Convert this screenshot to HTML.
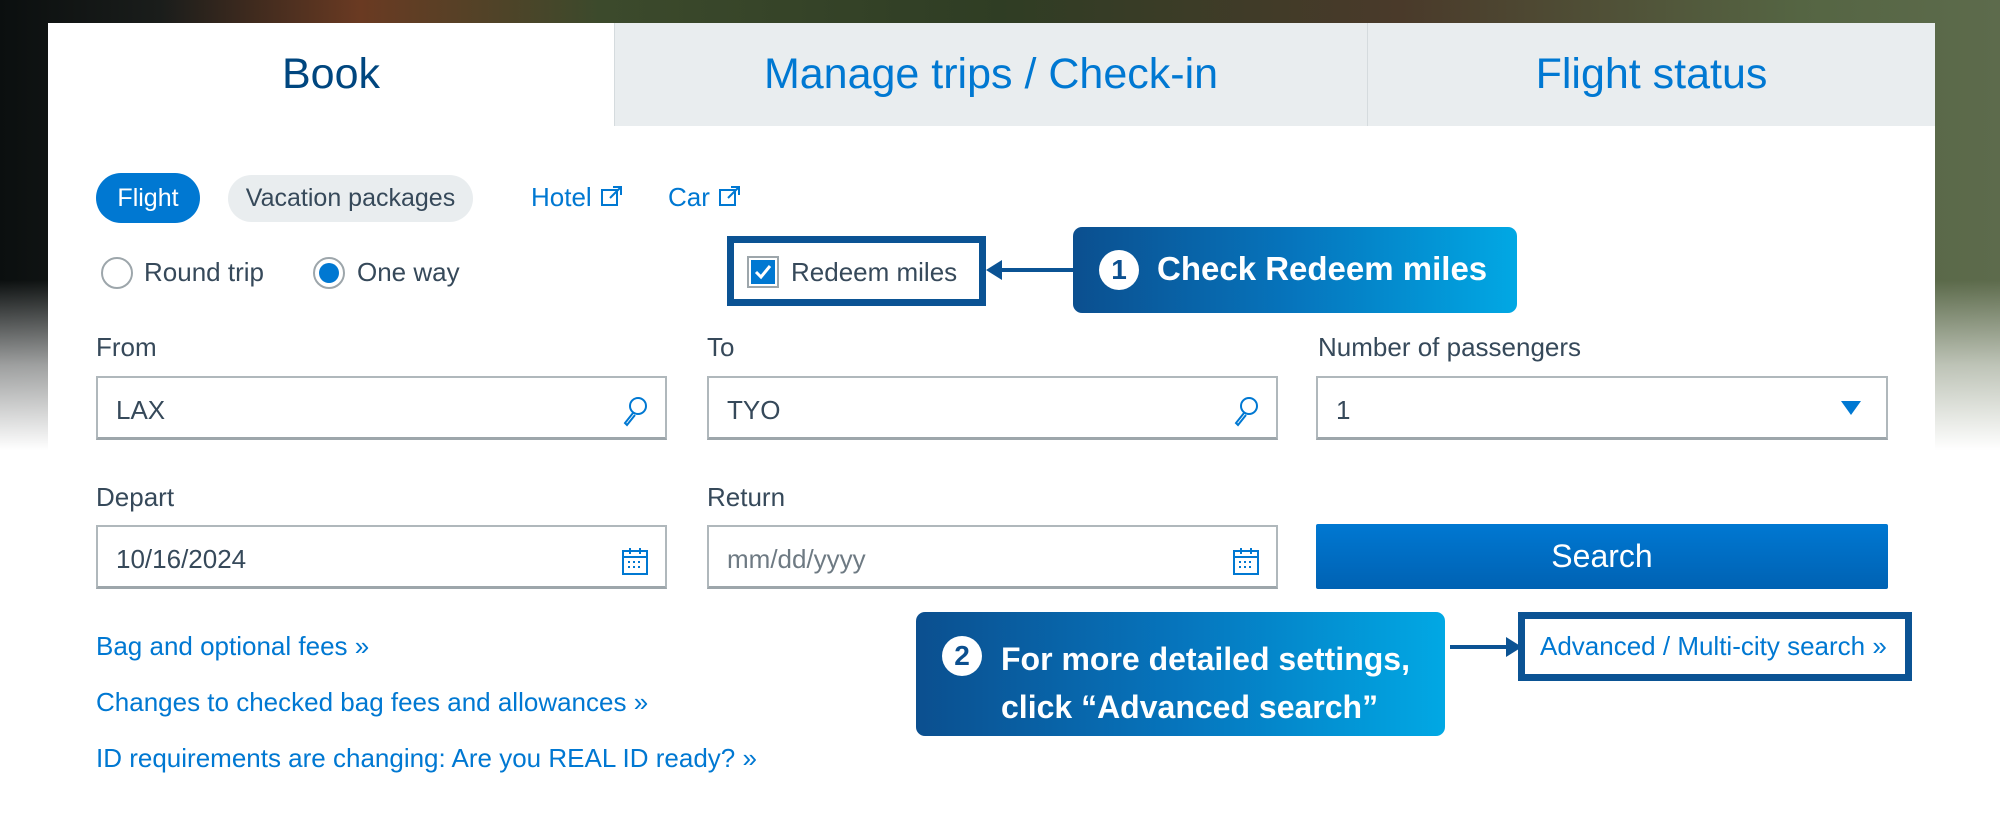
<!DOCTYPE html>
<html><head><meta charset="utf-8"><style>
*{margin:0;padding:0;box-sizing:border-box}
body{width:2000px;height:824px;position:relative;overflow:hidden;font-family:"Liberation Sans",Arial,sans-serif;background:#fff}
.bg{position:absolute;left:0;top:0;width:2000px;height:450px;background:linear-gradient(90deg,#0b0f0f 0%,#1a1d1b 8%,#6a3a22 18%,#3c4a2c 30%,#2f3d24 50%,#4a3a2a 70%,#556543 90%,#5d6b4c 100%)}
.fade{position:absolute;left:0;top:280px;width:2000px;height:170px;background:linear-gradient(180deg,rgba(255,255,255,0) 0%,rgba(255,255,255,.6) 50%,#fff 100%)}
.a{position:absolute}
.panel{left:48px;top:23px;width:1887px;height:801px;background:#fff}
.tab{top:23px;height:103px;display:flex;align-items:center;justify-content:center;font-size:43px;color:#0078d2}
.t{font-size:26px;color:#36495a;white-space:nowrap}
.inp{background:#fff;border:2px solid #b0b8bc;border-bottom:3px solid #9da6ab;height:64px}
.val{font-size:26px;color:#36495a;position:absolute;left:18px;top:17px}
.lnk{font-size:26px;color:#0078d2;white-space:nowrap}
.grad{background:linear-gradient(90deg,#0b4f8f 0%,#0675bd 50%,#01a8e4 100%);border-radius:9px}
.num{width:40px;height:40px;border-radius:50%;background:#fff;color:#0b4f8f;font-weight:bold;font-size:28px;display:flex;align-items:center;justify-content:center}
</style></head><body>
<div class="bg"></div><div class="fade"></div>
<div class="a panel"></div>
<div class="a tab" style="left:48px;width:566px;background:#fff;color:#00467f">Book</div>
<div class="a tab" style="left:614px;width:753px;background:#e9edef;border-left:1px solid #d5dbde">Manage trips / Check-in</div>
<div class="a tab" style="left:1367px;width:568px;background:#e9edef;border-left:1px solid #d5dbde">Flight status</div>

<div class="a" style="left:96px;top:173px;width:104px;height:50px;border-radius:25px;background:#0078d2;color:#fff;font-size:25px;display:flex;align-items:center;justify-content:center">Flight</div>
<div class="a" style="left:228px;top:175px;width:245px;height:47px;border-radius:24px;background:#e9edef;color:#36495a;font-size:25px;display:flex;align-items:center;justify-content:center">Vacation packages</div>
<div class="a lnk" style="left:531px;top:182px">Hotel</div>
<svg class="a" style="left:600px;top:184px" width="24" height="24" viewBox="0 0 24 24" fill="none" stroke="#0078d2" stroke-width="2"><rect x="2" y="6" width="15" height="15"/><path d="M10 14L21 3M13 3h8v8"/></svg>
<div class="a lnk" style="left:668px;top:182px">Car</div>
<svg class="a" style="left:718px;top:184px" width="24" height="24" viewBox="0 0 24 24" fill="none" stroke="#0078d2" stroke-width="2"><rect x="2" y="6" width="15" height="15"/><path d="M10 14L21 3M13 3h8v8"/></svg>

<div class="a" style="left:101px;top:257px;width:32px;height:32px;border-radius:50%;border:2px solid #9da6ab;background:#fff"></div>
<div class="a t" style="left:144px;top:257px">Round trip</div>
<div class="a" style="left:313px;top:257px;width:32px;height:32px;border-radius:50%;border:2px solid #9da6ab;background:#fff"><div style="position:absolute;left:4px;top:4px;width:20px;height:20px;border-radius:50%;background:#0078d2"></div></div>
<div class="a t" style="left:357px;top:257px">One way</div>

<div class="a" style="left:727px;top:236px;width:259px;height:70px;border:7px solid #0b5394;background:#fff"></div>
<div class="a" style="left:747px;top:256px;width:32px;height:32px;border:2px solid #9da6ab;background:#fff;padding:2px"><svg width="24" height="24" viewBox="0 0 24 24"><rect width="24" height="24" fill="#0078d2"/><path d="M5 12l5 5 9-11" stroke="#fff" stroke-width="3" fill="none"/></svg></div>
<div class="a t" style="left:791px;top:257px">Redeem miles</div>
<svg class="a" style="left:986px;top:258px" width="90" height="24"><path d="M0 12L16 2V22Z" fill="#0b5394"/><rect x="14" y="10" width="76" height="4" fill="#0b5394"/></svg>
<div class="a grad" style="left:1073px;top:227px;width:444px;height:86px"></div>
<div class="a num" style="left:1099px;top:250px">1</div>
<div class="a" style="left:1157px;top:250px;color:#fff;font-weight:bold;font-size:33px;white-space:nowrap">Check Redeem miles</div>

<div class="a t" style="left:96px;top:332px">From</div>
<div class="a t" style="left:707px;top:332px">To</div>
<div class="a t" style="left:1318px;top:332px">Number of passengers</div>
<div class="a inp" style="left:96px;top:376px;width:571px"><div class="val">LAX</div></div>
<div class="a inp" style="left:707px;top:376px;width:571px"><div class="val">TYO</div></div>
<div class="a inp" style="left:1316px;top:376px;width:572px"><div class="val">1</div></div>
<svg class="a" style="left:620px;top:395px" width="30" height="32" viewBox="0 0 30 32" fill="none" stroke="#0078d2" stroke-width="2"><circle cx="18" cy="11" r="8"/><path d="M13 18L5 28l2 2 8-10"/></svg>
<svg class="a" style="left:1231px;top:395px" width="30" height="32" viewBox="0 0 30 32" fill="none" stroke="#0078d2" stroke-width="2"><circle cx="18" cy="11" r="8"/><path d="M13 18L5 28l2 2 8-10"/></svg>
<svg class="a" style="left:1841px;top:400px" width="20" height="16"><path d="M0 1H20L10 15Z" fill="#0078d2"/></svg>

<div class="a t" style="left:96px;top:482px">Depart</div>
<div class="a t" style="left:707px;top:482px">Return</div>
<div class="a inp" style="left:96px;top:525px;width:571px"><div class="val">10/16/2024</div></div>
<div class="a inp" style="left:707px;top:525px;width:571px"><div class="val" style="color:#6e7a83">mm/dd/yyyy</div></div>
<svg class="a" style="left:621px;top:546px" width="28" height="30" viewBox="0 0 28 30" fill="none" stroke="#0078d2" stroke-width="2"><rect x="2" y="5" width="24" height="23"/><path d="M2 11h24M9 2v6M19 2v6"/><path d="M7 16h2M12 16h2M17 16h2M7 21h2M12 21h2M17 21h2" stroke-width="2"/></svg>
<svg class="a" style="left:1232px;top:546px" width="28" height="30" viewBox="0 0 28 30" fill="none" stroke="#0078d2" stroke-width="2"><rect x="2" y="5" width="24" height="23"/><path d="M2 11h24M9 2v6M19 2v6"/><path d="M7 16h2M12 16h2M17 16h2M7 21h2M12 21h2M17 21h2" stroke-width="2"/></svg>
<div class="a" style="left:1316px;top:524px;width:572px;height:65px;background:linear-gradient(180deg,#0078d2,#0062b3);border-radius:2px;color:#fff;font-size:32px;display:flex;align-items:center;justify-content:center">Search</div>

<div class="a lnk" style="left:96px;top:631px">Bag and optional fees »</div>
<div class="a lnk" style="left:96px;top:687px">Changes to checked bag fees and allowances »</div>
<div class="a lnk" style="left:96px;top:743px">ID requirements are changing: Are you REAL ID ready? »</div>

<div class="a grad" style="left:916px;top:612px;width:529px;height:124px"></div>
<div class="a num" style="left:942px;top:636px">2</div>
<div class="a" style="left:1001px;top:635px;color:#fff;font-weight:bold;font-size:32px;line-height:48px;white-space:nowrap">For more detailed settings,<br>click “Advanced search”</div>
<svg class="a" style="left:1450px;top:635px" width="72" height="24"><rect x="0" y="10" width="58" height="4" fill="#0b5394"/><path d="M72 12L56 2V22Z" fill="#0b5394"/></svg>
<div class="a" style="left:1518px;top:612px;width:394px;height:69px;border:7px solid #0b5394;background:#fff"></div>
<div class="a lnk" style="left:1540px;top:631px">Advanced / Multi-city search »</div>
</body></html>
